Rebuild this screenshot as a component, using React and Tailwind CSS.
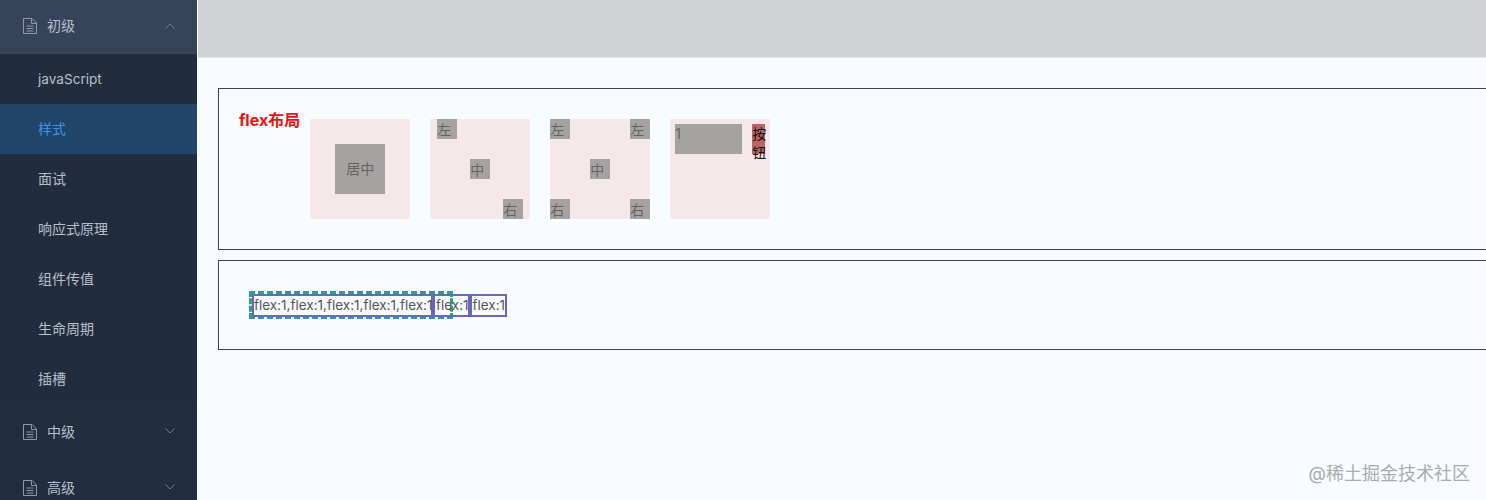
const FONT = "font-['Inter','Noto_Sans_CJK_SC',sans-serif]";

function DocIcon() {
  return (
    <svg width="14" height="16" viewBox="0 0 14 16" fill="none" stroke="#8f99a8" strokeWidth="1" className="shrink-0">
      <path d="M.5.5h8.5l4.5 4.5v10.5H.5z" />
      <path d="M8.5.5v5h5" />
      <path d="M3.5 8h7M3.5 10.5h7M3.5 13h7" />
    </svg>
  );
}

function Chevron({ up }) {
  return (
    <svg width="10" height="6" viewBox="0 0 10 6" fill="none" stroke="#737e8e" strokeWidth="1" className={`ml-auto mr-[22px] shrink-0 ${up ? "-mt-px" : "-mt-[3px]"}`}>
      <path d={up ? "M.5 5.5L5 1l4.5 4.5" : "M.5.5L5 5 9.5.5"} />
    </svg>
  );
}

function Group({ label, up, className = "" }) {
  return (
    <div className={`flex h-[56px] items-center pl-[23px] text-sm text-[#b8bfc9] ${className}`}>
      <DocIcon />
      <span className="ml-[10px]">{label}</span>
      <Chevron up={up} />
    </div>
  );
}

function Item({ label, active, className = "text-sm" }) {
  return (
    <div className={`flex h-[50px] items-center pl-[38px] ${className} ${active ? "bg-[#214568] text-[#3f93e6]" : "bg-[#212d3e] text-[#b8bfc9]"}`}>
      {label}
    </div>
  );
}

function Tile({ className, children }) {
  return <div className={`flex h-[100px] w-[100px] shrink-0 bg-[#f4e8e8] ${className}`}>{children}</div>;
}

function Cell({ children, className = "" }) {
  return <div className={`h-5 w-5 bg-[#a7a2a2] text-sm leading-[22px] text-[#666262] ${className}`}>{children}</div>;
}

function FlexBox({ children, className = "" }) {
  return <div className={`box-border flex-none border-2 border-[#6667c0] text-[13.5px] leading-[19px] text-[#555] ${className}`}>{children}</div>;
}

export default function App() {
  return (
    <div className={`relative flex h-[500px] w-full overflow-hidden bg-[#f8fbff] ${FONT}`}>
      <aside className="w-[197px] shrink-0 overflow-hidden bg-[#222d3f]">
        <Group label="初级" up className="-mt-[2px] bg-[#36445b]" />
        <Item label="javaScript" className="text-[13.6px]" />
        <Item label="样式" active />
        <Item label="面试" />
        <Item label="响应式原理" />
        <Item label="组件传值" />
        <Item label="生命周期" />
        <Item label="插槽" />
        <Group label="中级" />
        <Group label="高级" />
      </aside>

      <main className="min-w-0 flex-1 overflow-hidden">
        <header className="ml-px box-border h-[58px] border-b border-[#e6e7ea] bg-[#d1d2d4]" />
        <section className="ml-[21px] mt-[30px] box-border flex h-[162px] w-[1400px] border border-[#3f4248] pl-5 pt-5">
          <h2 className="h-[22px] text-base font-bold leading-[22px] text-[#ee1111]">flex布局</h2>
          <div className="ml-[10px] mt-[10px] flex gap-5">
            <Tile className="items-center justify-center">
              <div className="flex h-[50px] w-[50px] items-center justify-center bg-[#a7a2a2] text-sm text-[#666262]">居中</div>
            </Tile>
            <Tile className="items-center justify-between px-[7px]">
              <Cell className="self-start">左</Cell>
              <Cell>中</Cell>
              <Cell className="self-end">右</Cell>
            </Tile>
            <Tile className="flex-col justify-between">
              <div className="flex justify-between"><Cell>左</Cell><Cell>左</Cell></div>
              <div className="flex justify-center"><Cell>中</Cell></div>
              <div className="flex justify-between"><Cell>右</Cell><Cell>右</Cell></div>
            </Tile>
            <Tile className="items-start px-[5px] pt-[5px]">
              <div className="h-[30px] w-[67px] bg-[#a7a2a2] text-sm leading-[20px] text-[#666262]">1</div>
              <div className="ml-auto h-[30px] w-[13px] bg-[#b96466] text-sm leading-[19px] text-[#111]">按钮</div>
            </Tile>
          </div>
        </section>
        <section className="ml-[21px] mt-[10px] box-border h-[90px] w-[1400px] border border-[#3f4248] pl-[30px] pt-[30px]">
          <div className="box-border flex h-[28px] w-[204px] items-start border-[3px] border-dashed border-[#30a07a]">
            <FlexBox className="w-[181px]">flex:1,flex:1,flex:1,flex:1,flex:1</FlexBox>
            <FlexBox className="w-[36.5px] pl-px">flex:1</FlexBox>
            <FlexBox className="w-[37.5px] pl-px">flex:1</FlexBox>
          </div>
        </section>
      </main>

      <div className="absolute bottom-[15px] right-[16px] text-lg leading-[22px] text-[#a9abae]">@稀土掘金技术社区</div>
    </div>
  );
}
